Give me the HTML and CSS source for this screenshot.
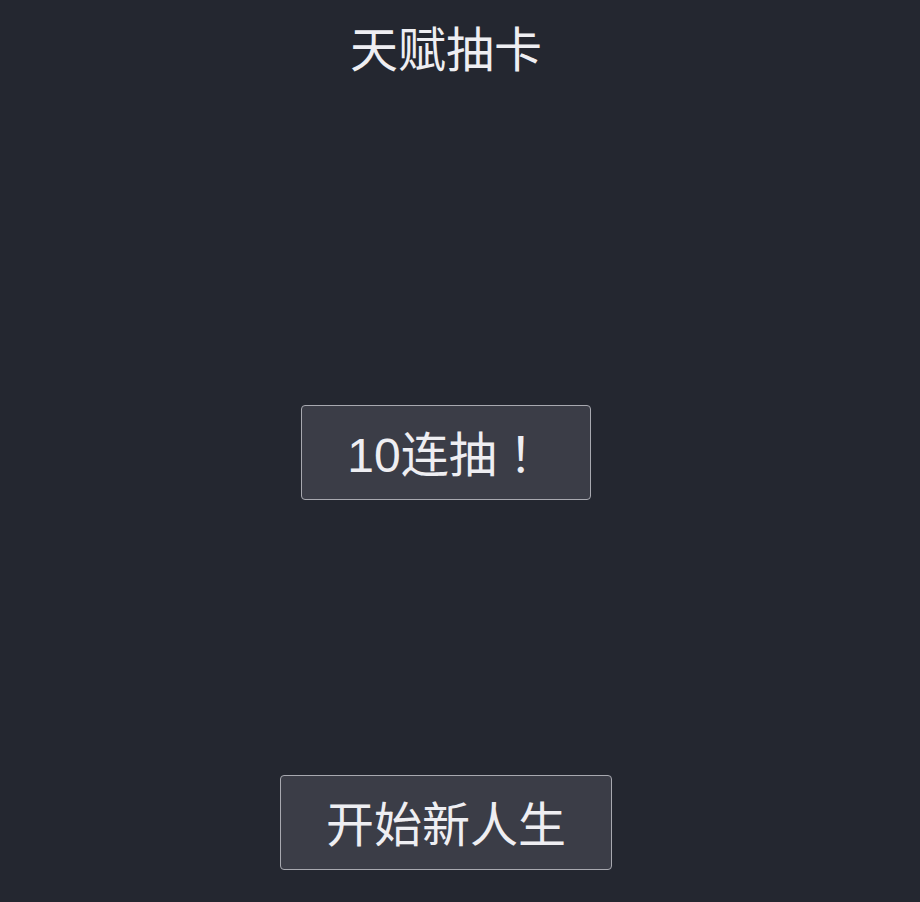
FILE: index.html
```html
<!DOCTYPE html>
<html lang="zh-CN">
<head>
    <meta charset="UTF-8">
    <meta name="viewport" content="width=device-width, initial-scale=1.0">
    <title>天赋抽卡</title>
    <link rel="stylesheet" href="styles.css">
</head>
<body>
<div class="page">
<div class="title">天赋抽卡</div>
<div class="talents"></div>
<button class="btn draw">10连抽<span lang="zh-TW">！</span></button>
<div class="spacer"></div>
<button class="btn start">开始新人生</button>
</div>
</body>
</html>
```

FILE: styles.css
```css
html, body {
    margin: 0;
    background-color: #242730;
}

body {
    color: #eeeef2;
    font-family: "Liberation Sans", "Noto Sans CJK SC", sans-serif;
}

.page {
    width: 892px;
    height: 902px;
    display: flex;
    flex-direction: column;
    align-items: center;
    padding-top: 16px;
    box-sizing: border-box;
}

.title {
    font-size: 48px;
    line-height: 70px;
}

.talents {
    height: 319px;
}

.spacer {
    height: 275px;
}

.btn {
    font-family: inherit;
    font-size: 48px;
    line-height: 73px;
    color: #eeeef2;
    background-color: #3b3d47;
    border: 1px solid #a8a9b0;
    border-radius: 4px;
    padding: 13px 45px 7px;
    cursor: pointer;
}
```
